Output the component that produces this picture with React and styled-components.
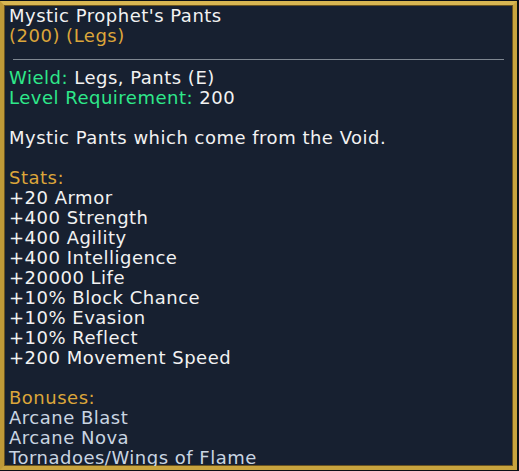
import React from "react";
import styled, { createGlobalStyle } from "styled-components";

const Global = createGlobalStyle`
  html, body { margin: 0; padding: 0; background: #0c1016; }
  body { width: 519px; height: 471px; overflow: hidden; }
`;

const Frame = styled.div`
  box-sizing: border-box;
  margin-top: 1px;
  width: 517px;
  height: 469px;
  border: 4px solid #c9a43e;
  border-top-color: #d8b652;
  border-left-color: #bf9a38;
  box-shadow: inset 0 0 0 1px #6b5420;
  background: #172030;
  padding: 1px 5px 0 5px;
  font-family: "DejaVu Sans", Lato, sans-serif;
  font-size: 18px;
  letter-spacing: 0.5px;
  line-height: 20px;
  color: #f2f2f2;
  overflow: hidden;
`;

const Line = styled.div`
  height: 20px;
  white-space: nowrap;
  color: ${(p) => p.$color || "#f2f2f2"};
`;

const Label = styled.span`
  color: #2ee88a;
`;

const Divider = styled.div`
  height: 1px;
  background: #7f8791;
  margin: 13px 4px 8px 4px;
`;

const Blank = styled.div`
  height: 20px;
`;

const stats = [
  "+20 Armor",
  "+400 Strength",
  "+400 Agility",
  "+400 Intelligence",
  "+20000 Life",
  "+10% Block Chance",
  "+10% Evasion",
  "+10% Reflect",
  "+200 Movement Speed",
];

const bonuses = ["Arcane Blast", "Arcane Nova", "Tornadoes/Wings of Flame"];

export default function App() {
  return (
    <>
      <Global />
      <Frame>
        <Line>Mystic Prophet's Pants</Line>
        <Line $color="#dca63a">(200) (Legs)</Line>
        <Divider />
        <Line>
          <Label>Wield:</Label> Legs, Pants (E)
        </Line>
        <Line>
          <Label>Level Requirement:</Label> 200
        </Line>
        <Blank />
        <Line>Mystic Pants which come from the Void.</Line>
        <Blank />
        <Line $color="#dca63a">Stats:</Line>
        {stats.map((s) => (
          <Line key={s}>{s}</Line>
        ))}
        <Blank />
        <Line $color="#dca63a">Bonuses:</Line>
        {bonuses.map((b) => (
          <Line key={b} $color="#c9d5e2">
            {b}
          </Line>
        ))}
      </Frame>
    </>
  );
}
